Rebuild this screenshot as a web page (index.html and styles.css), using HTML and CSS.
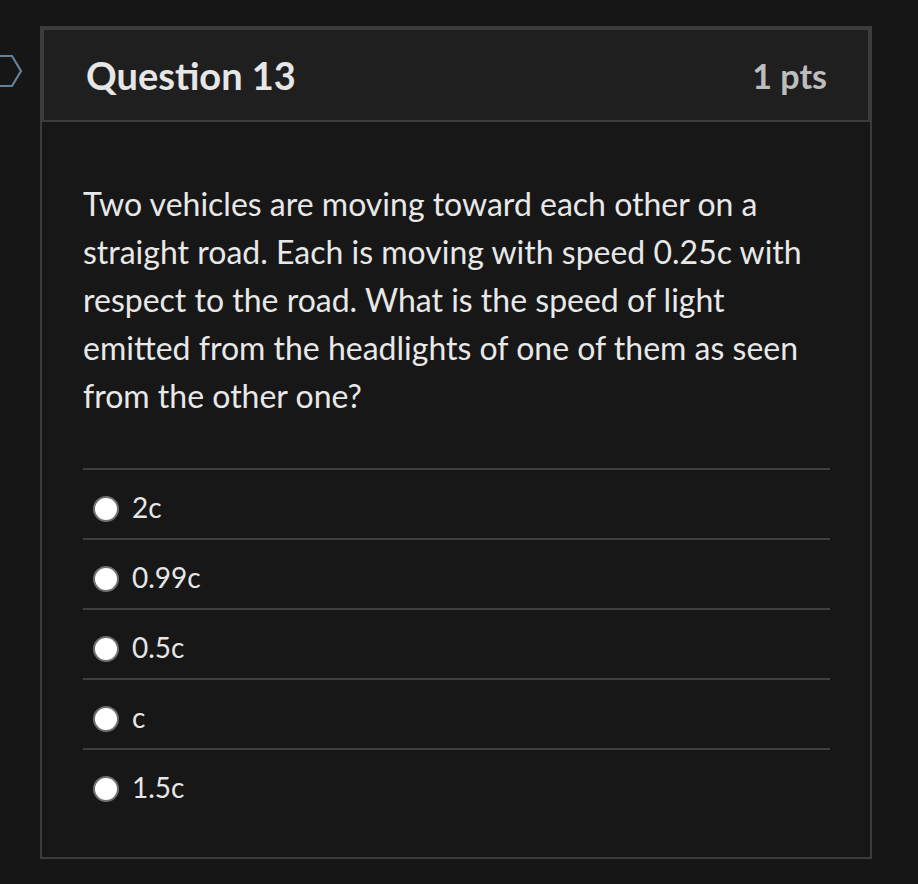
FILE: index.html
```html
<!DOCTYPE html>
<html lang="en">
<head>
<meta charset="utf-8">
<title>Question 13</title>
<link rel="stylesheet" href="styles.css">
</head>
<body>
<svg class="nav-tab" width="24" height="34" viewBox="0 0 24 34" aria-hidden="true">
  <path d="M0 2 H12 L21 17 L12 32 H0" fill="none" stroke="#62819c" stroke-width="2.2" stroke-linejoin="miter"/>
</svg>
<div class="quiz">
  <div class="header">
    <h2 class="title">Question 13</h2>
    <div class="pts">1 pts</div>
  </div>
  <div class="content">
    <p class="question">Two vehicles are moving toward each other on a straight road. Each is moving with speed 0.25c with respect to the road. What is the speed of light emitted from the headlights of one of them as seen from the other one?</p>
    <ul class="answers">
      <li class="answer"><span class="radio"></span><span class="label">2c</span></li>
      <li class="answer"><span class="radio"></span><span class="label">0.99c</span></li>
      <li class="answer"><span class="radio"></span><span class="label">0.5c</span></li>
      <li class="answer"><span class="radio"></span><span class="label">c</span></li>
      <li class="answer"><span class="radio"></span><span class="label">1.5c</span></li>
    </ul>
  </div>
</div>
</body>
</html>
```
FILE: styles.css
```css
html, body {
  margin: 0;
  padding: 0;
  background: #161616;
}
body {
  font-family: Lato, "Open Sans", "Liberation Sans", sans-serif;
  color: #e8e8e8;
  padding: 26px 0 0 40px;
  height: 884px;
  box-sizing: border-box;
  position: relative;
  overflow: hidden;
}
.nav-tab {
  position: absolute;
  left: 0;
  top: 54px;
}
.quiz {
  width: 832px;
  height: 833px;
  box-sizing: border-box;
  border: 2px solid #3c3c3c;
  background: #171717;
}
.header {
  height: 94px;
  box-sizing: border-box;
  border: 2px solid #3c3c3c;
  background: #1f1f1f;
  display: flex;
  align-items: center;
  justify-content: space-between;
  padding: 0 41px 0 42px;
}
.title {
  margin: 0;
  font-size: 38px;
  font-weight: 700;
  color: #e6e6e6;
}
.pts {
  font-size: 34px;
  font-weight: 700;
  color: #bdbdbd;
}
.content {
  padding: 58px 40px 0 41px;
}
.question {
  margin: 0 0 48px;
  font-size: 32px;
  line-height: 48px;
  color: #e8e8e8;
}
.answers {
  list-style: none;
  margin: 0;
  padding: 0;
}
.answer {
  height: 70px;
  box-sizing: border-box;
  border-top: 2px solid #3f3f3f;
  padding-top: 10px;
  display: flex;
  align-items: center;
}
.radio {
  width: 26px;
  height: 26px;
  box-sizing: border-box;
  border-radius: 50%;
  border: 2px solid #707070;
  background: #ffffff;
  margin-left: 10px;
  margin-right: 13px;
  flex: none;
}
.label {
  font-size: 28px;
  color: #e6e6e6;
  padding-bottom: 4px;
}
```
